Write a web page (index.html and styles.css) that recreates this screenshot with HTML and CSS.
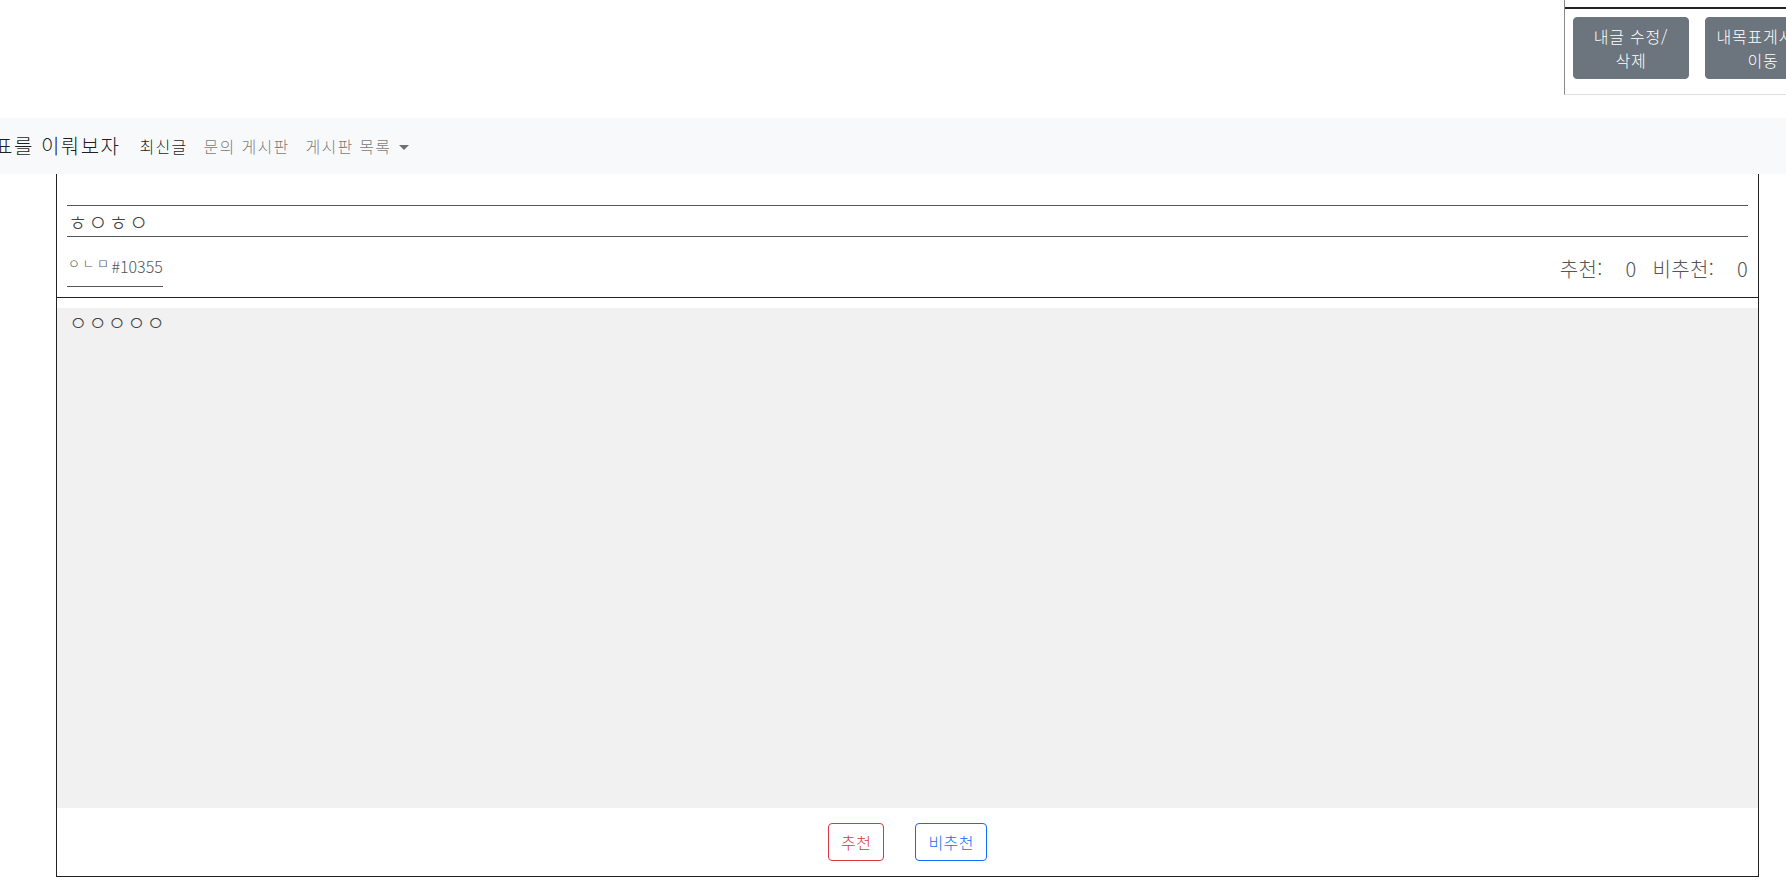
FILE: index.html
```html
<!DOCTYPE html>
<html lang="ko">
<head>
<meta charset="utf-8">
<title>게시글</title>
<link rel="stylesheet" href="styles.css">
</head>
<body>
<div class="page">
  <header class="top">
    <div class="mybox">
      <div class="mybox-inner">
        <button class="btn-secondary">내글 수정/<br>삭제</button>
        <button class="btn-secondary">내목표게시판<br>이동</button>
      </div>
    </div>
  </header>
  <nav class="navbar">
    <span class="brand">표를 이뤄보자</span>
    <a class="nav-link active">최신글</a>
    <a class="nav-link">문의 게시판</a>
    <a class="nav-link dropdown">게시판 목록<span class="caret"></span></a>
  </nav>
  <main class="post">
    <div class="post-head">
      <div class="post-title">ㅎㅇㅎㅇ</div>
      <div class="post-meta">
        <div class="author"><span class="nick">ㅇㄴㅁ</span><span class="uid">#10355</span></div>
        <div class="counts">
          <span class="lbl">추천:</span><span class="num">0</span>
          <span class="lbl second">비추천:</span><span class="num">0</span>
        </div>
      </div>
    </div>
    <div class="post-body">ㅇㅇㅇㅇㅇ</div>
    <div class="post-actions">
      <button class="btn-outline red">추천</button>
      <button class="btn-outline blue">비추천</button>
    </div>
  </main>
</div>
</body>
</html>
```
FILE: styles.css
```css
html, body {
  margin: 0;
  padding: 0;
  background: #fff;
}
body {
  font-family: "Noto Sans CJK KR", "Noto Sans", sans-serif;
  font-weight: 300;
  font-size: 16px;
  line-height: 24px;
  color: #212529;
  overflow: hidden;
}
.page {
  width: 1786px;
  overflow: hidden;
}
.top {
  display: flex;
  justify-content: flex-end;
  height: 118px;
}
.mybox {
  width: 221px;
  height: 87px;
  border-left: 1px solid #8a8a8a;
  border-bottom: 1px solid #dee2e6;
  padding-top: 7px;
  box-sizing: content-box;
  overflow: hidden;
}
.mybox-inner {
  border-top: 2px solid #212529;
  padding: 8px 0 8px 8px;
  display: flex;
  gap: 16px;
  white-space: nowrap;
}
.btn-secondary {
  flex: 0 0 116px;
  width: 116px;
  height: 62px;
  background: #6c757d;
  color: #fff;
  border: 1px solid #6c757d;
  border-radius: 4px;
  font-family: inherit;
  font-weight: 300;
  font-size: 16px;
  line-height: 24px;
  letter-spacing: 0.8px;
  padding: 6px 4px;
  text-align: center;
  overflow: hidden;
}
.navbar {
  display: flex;
  align-items: center;
  height: 56px;
  background: #f8f9fa;
}
.brand {
  font-size: 20px;
  line-height: 30px;
  letter-spacing: 1.5px;
  color: rgba(0,0,0,.9);
  margin-left: -6px;
  margin-right: 11px;
  white-space: nowrap;
}
.nav-link {
  padding: 8px;
  color: rgba(0,0,0,.55);
  font-size: 16px;
  line-height: 24px;
  letter-spacing: 1.3px;
  white-space: nowrap;
}
.nav-link.active {
  color: rgba(0,0,0,.9);
}
.caret {
  display: inline-block;
  margin-left: 8px;
  vertical-align: 3px;
  border-top: 5px solid rgba(0,0,0,.55);
  border-left: 5px solid transparent;
  border-right: 5px solid transparent;
}
.post {
  margin: 0 27px 0 56px;
  border: 1px solid #222;
  border-top: none;
}
.post-head {
  padding: 31px 10px 10px 10px;
  border-bottom: 1px solid #222;
}
.post-title {
  border-top: 1px solid #555;
  border-bottom: 1px solid #555;
  height: 30px;
  line-height: 30px;
  padding-left: 1px;
  font-size: 21px;
  letter-spacing: 1px;
  color: #444;
}
.post-meta {
  height: 50px;
  display: flex;
  justify-content: space-between;
  align-items: flex-end;
}
.author {
  border-bottom: 1px solid #555;
  padding-bottom: 8px;
  line-height: 24px;
  color: #555;
}
.nick {
  font-size: 13px;
  letter-spacing: 2.5px;
  vertical-align: 5px;
  padding-left: 1px;
}
.uid {
  font-size: 16px;
  color: #555;
}
.counts {
  margin-bottom: 6px;
  font-size: 20px;
  line-height: 24px;
  letter-spacing: 0.3px;
  color: #555;
  display: flex;
}
.counts .num {
  margin-left: 23px;
  color: #555;
}
.counts .second {
  margin-left: 16px;
}
.post-body {
  margin-top: 10px;
  height: 494px;
  padding: 3px 12px;
  background: #f1f1f1;
  color: #444;
  font-size: 20px;
  letter-spacing: 1px;
}
.post-actions {
  display: flex;
  justify-content: center;
  gap: 31px;
  padding: 15px 0;
}
.btn-outline {
  height: 38px;
  padding: 6px 12px;
  background: #fff;
  border: 1px solid;
  border-radius: 4px;
  font-family: inherit;
  font-weight: 300;
  font-size: 16px;
  line-height: 24px;
  letter-spacing: 0.5px;
}
.btn-outline.red {
  color: #dc3545;
  border-color: #dc3545;
}
.btn-outline.blue {
  color: #0d6efd;
  border-color: #0d6efd;
}
```
